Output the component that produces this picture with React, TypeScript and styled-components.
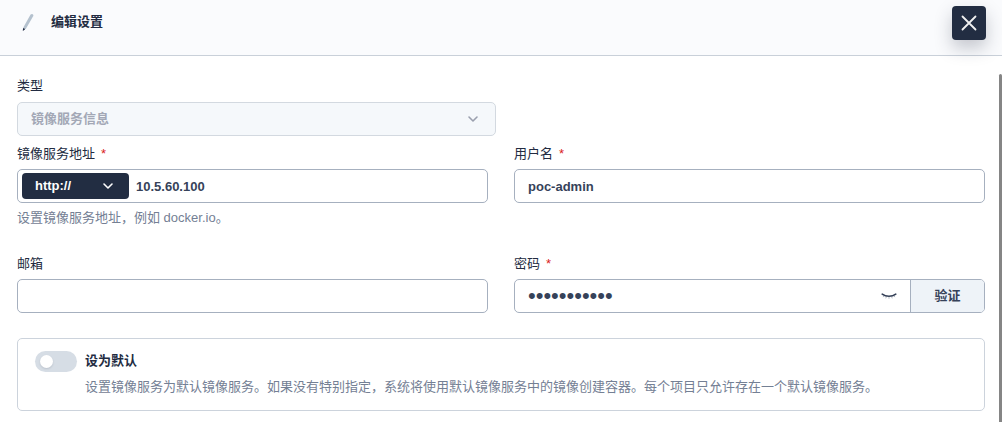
import React, { useState } from "react";
import styled, { createGlobalStyle } from "styled-components";

const GlobalStyle = createGlobalStyle`
  *, *::before, *::after { box-sizing: border-box; }
  body {
    margin: 0;
    background: #fff;
    color: #222b41;
    font-family: "Liberation Sans", "Noto Sans CJK SC", sans-serif;
    font-size: 13px;
    line-height: 20px;
  }
  button, input, select { font: inherit; color: inherit; }
`;

const Page = styled.div`
  display: flex;
  flex-direction: column;
  min-height: 100vh;
`;

const Header = styled.header`
  display: flex;
  align-items: flex-start;
  height: 56px;
  padding: 6px 16px 0 20px;
  background: #fafbfd;
  border-bottom: 1px solid #c9d0d9;
`;

const HeaderIcon = styled.svg`
  width: 16px;
  height: 20px;
  margin-top: 6px;
`;

const Title = styled.h1`
  flex: 1;
  margin: 6px 0 0 15px;
  font-size: 13px;
  line-height: 20px;
  font-weight: 700;
`;

const CloseButton = styled.button`
  display: flex;
  align-items: center;
  justify-content: center;
  width: 34px;
  height: 34px;
  padding: 0;
  border: 0;
  border-radius: 4px;
  background: #222d42;
  color: #f0f0f0;
  box-shadow: 0 8px 17px rgba(34, 43, 65, 0.25);
  cursor: pointer;
`;

const Body = styled.div`
  flex: 1;
  display: flex;
`;

const Form = styled.form`
  flex: 1;
  min-width: 0;
  padding: 20px 14px 11px 17px;
`;

const ScrollThumb = styled.div`
  width: 3px;
  margin-top: 18px;
  border-radius: 2px 2px 0 0;
  background: #858585;
`;

const Grid = styled.div`
  display: grid;
  grid-template-columns: 1fr 1fr;
  column-gap: 26px;
  row-gap: 26px;
`;

const Field = styled.div`
  min-width: 0;
`;

const TypeField = styled(Field)`
  width: calc(50% - 5px);
  margin-bottom: 8px;
`;

const Label = styled.label`
  display: block;
  margin-bottom: 5px;
`;

const TypeLabel = styled(Label)`
  margin-bottom: 6px;
`;

const Required = styled.span`
  margin-left: 6px;
  color: #d92020;
`;

const Control = styled.div`
  display: flex;
  align-items: center;
  height: 34px;
  border: 1px solid #a6b0bf;
  border-radius: 5px;
  background: #fff;
  overflow: hidden;
`;

const Input = styled.input<{ $inset?: number }>`
  flex: 1;
  min-width: 0;
  height: 100%;
  padding: 0 13px 0 ${(p) => p.$inset ?? 13}px;
  border: 0;
  outline: 0;
  background: transparent;
  color: #364259;
  font-weight: 700;

  &[type="password"] {
    font-size: 22px;
    font-weight: 400;
  }
`;

const SelectWrap = styled.div<{ $dark?: boolean }>`
  display: grid;
  align-items: center;
  width: ${(p) => (p.$dark ? "107px" : "100%")};
  height: ${(p) => (p.$dark ? "26px" : "34px")};
  margin-left: ${(p) => (p.$dark ? "4px" : "0")};
  border: ${(p) => (p.$dark ? "0" : "1px solid #d3d9e0")};
  border-radius: ${(p) => (p.$dark ? "4px" : "5px")};
  background: ${(p) => (p.$dark ? "#222d42" : "#f5f8fb")};
  color: ${(p) => (p.$dark ? "#fff" : "#9a9fae")};

  > * { grid-area: 1 / 1; }
  > svg {
    justify-self: end;
    margin-right: ${(p) => (p.$dark ? "15px" : "16px")};
    pointer-events: none;
  }
`;

const Select = styled.select`
  appearance: none;
  width: 100%;
  height: 100%;
  padding: 0 13px;
  border: 0;
  outline: 0;
  background: transparent;
  font-weight: 700;
  opacity: 1;

  &:disabled { color: #a3a8b6; opacity: 1; }
  option { color: #222b41; }
`;

const Help = styled.p`
  margin: 5px 0 0;
  color: #748094;
`;

const EyeButton = styled.button`
  display: flex;
  padding: 0;
  margin-right: 13px;
  border: 0;
  background: transparent;
  color: #364259;
  cursor: pointer;
`;

const VerifyButton = styled.button`
  width: 74px;
  height: 100%;
  padding: 0;
  border: 0;
  border-left: 1px solid #a6b0bf;
  background: #eef3f8;
  color: #364259;
  font-weight: 700;
  cursor: pointer;
`;

const DefaultCard = styled.div`
  display: flex;
  gap: 8px;
  margin-top: 25px;
  padding: 12px 17px 13px;
  border: 1px solid #ccd3dc;
  border-radius: 5px;
`;

const Toggle = styled.input`
  appearance: none;
  flex: none;
  display: flex;
  align-items: center;
  width: 42px;
  height: 21px;
  margin: 0;
  padding: 0 5px;
  border-radius: 11px;
  background: #d6dde5;
  cursor: pointer;

  &::before {
    content: "";
    width: 13px;
    height: 13px;
    border-radius: 50%;
    background: #fff;
    box-shadow: 0 1px 2px rgba(34, 43, 65, 0.15);
  }
  &:checked { justify-content: flex-end; background: #222d42; }
`;

const DefaultLabel = styled.label`
  display: block;
  font-weight: 700;
`;

const DefaultText = styled.p`
  margin: 6px 0 0;
  color: #748094;
`;

const Chevron = () => (
  <svg width="12" height="8" viewBox="0 0 12 8" fill="none" stroke="currentColor" strokeWidth="1.6" strokeLinecap="round" strokeLinejoin="round" aria-hidden="true">
    <path d="M2 2 6 6l4-4" />
  </svg>
);

const Pencil = () => (
  <HeaderIcon viewBox="0 0 16 20" aria-hidden="true">
    <path d="M10.600 2.600Q11.600 1.700 12.700 2.200T13.300 4L6.200 16.200 3.600 14.900Z" fill="#b4c1ce" />
    <path d="M3.600 14.900 6.200 16.200 3.200 18.500Z" fill="#9dabba" />
    <path d="m3.100 16.100 2 1.200L2.800 19Z" fill="#222b41" />
  </HeaderIcon>
);

const ClosedEye = () => (
  <svg width="16" height="8" viewBox="0 0 16 8" fill="none" stroke="currentColor" strokeLinecap="round" aria-hidden="true">
    <path d="M1.200 2.200Q4 4.300 8 4.300T14.800 2.200" strokeWidth="1.600" />
    <path d="M2.900 3.800 2.300 4.800M5.400 4.800 4.900 6M8 5.100V6.400M10.600 4.800l.5 1.200M13.100 3.800l.6 1" strokeWidth=".6" opacity=".6" />
  </svg>
);

export default function App() {
  const [visible, setVisible] = useState(false);

  return (
    <>
      <GlobalStyle />
      <Page>
        <Header>
          <Pencil />
          <Title>编辑设置</Title>
          <CloseButton type="button" aria-label="关闭">
            <svg width="16" height="16" viewBox="0 0 16 16" fill="none" stroke="currentColor" strokeWidth="1.800" strokeLinecap="round" aria-hidden="true">
              <path d="m1.500 1.500 13 13M14.500 1.500l-13 13" />
            </svg>
          </CloseButton>
        </Header>
        <Body>
          <Form onSubmit={(e) => e.preventDefault()}>
            <TypeField>
              <TypeLabel htmlFor="type">类型</TypeLabel>
              <SelectWrap>
                <Select id="type" disabled defaultValue="registry">
                  <option value="registry">镜像服务信息</option>
                </Select>
                <Chevron />
              </SelectWrap>
            </TypeField>
            <Grid>
              <Field>
                <Label htmlFor="address">镜像服务地址<Required>*</Required></Label>
                <Control>
                  <SelectWrap $dark>
                    <Select aria-label="协议" defaultValue="http">
                      <option value="http">http://</option>
                      <option value="https">https://</option>
                    </Select>
                    <Chevron />
                  </SelectWrap>
                  <Input id="address" $inset={7} defaultValue="10.5.60.100" />
                </Control>
                <Help>设置镜像服务地址，例如 docker.io。</Help>
              </Field>
              <Field>
                <Label htmlFor="user">用户名<Required>*</Required></Label>
                <Control>
                  <Input id="user" defaultValue="poc-admin" />
                </Control>
              </Field>
              <Field>
                <Label htmlFor="email">邮箱</Label>
                <Control>
                  <Input id="email" type="email" />
                </Control>
              </Field>
              <Field>
                <Label htmlFor="password">密码<Required>*</Required></Label>
                <Control>
                  <Input id="password" type={visible ? "text" : "password"} defaultValue="poc-adminpw" />
                  <EyeButton type="button" aria-label="显示密码" onClick={() => setVisible(!visible)}>
                    <ClosedEye />
                  </EyeButton>
                  <VerifyButton type="button">验证</VerifyButton>
                </Control>
              </Field>
            </Grid>
            <DefaultCard>
              <Toggle id="default" type="checkbox" />
              <div>
                <DefaultLabel htmlFor="default">设为默认</DefaultLabel>
                <DefaultText>
                  设置镜像服务为默认镜像服务。如果没有特别指定，系统将使用默认镜像服务中的镜像创建容器。每个项目只允许存在一个默认镜像服务。
                </DefaultText>
              </div>
            </DefaultCard>
          </Form>
          <ScrollThumb />
        </Body>
      </Page>
    </>
  );
}
